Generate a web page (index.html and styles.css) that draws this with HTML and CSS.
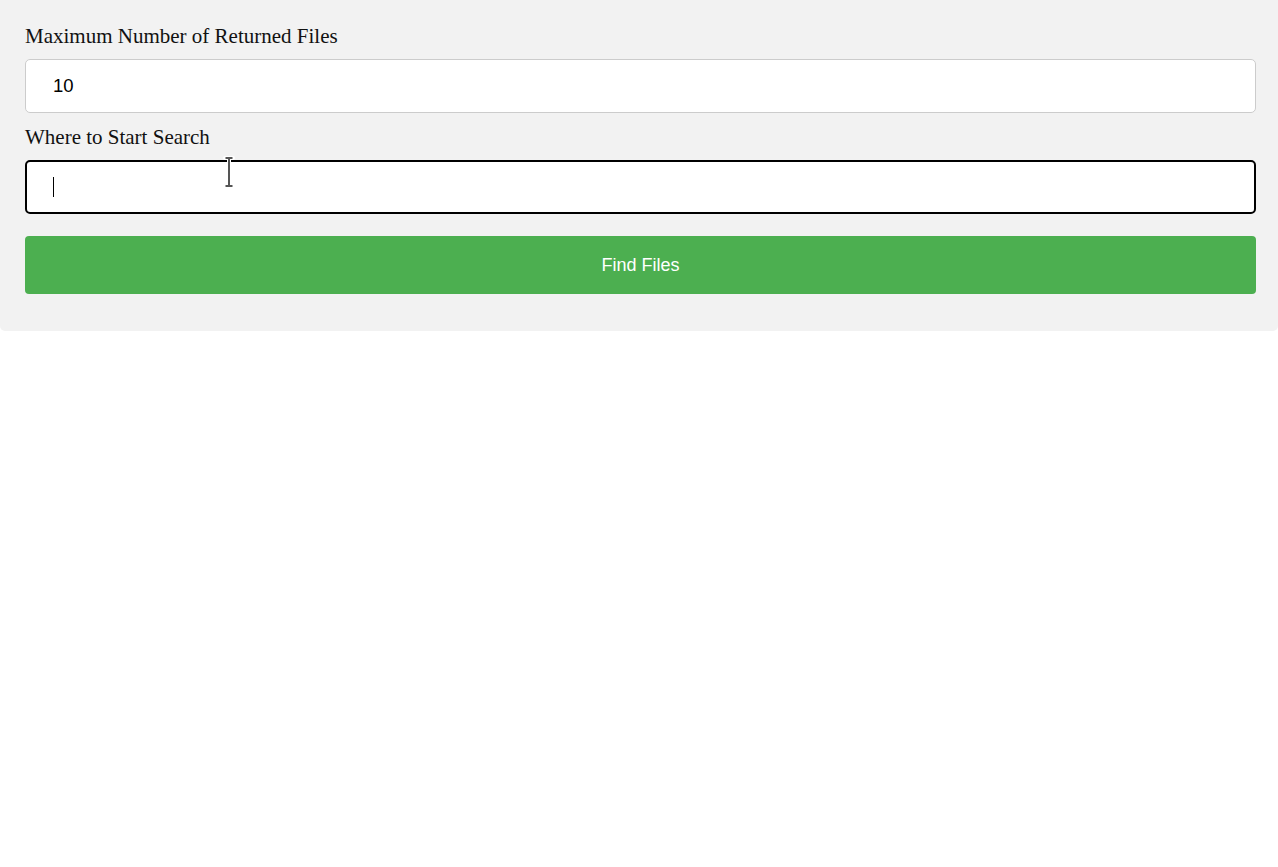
FILE: index.html
```html
<!DOCTYPE html>
<html lang="en">
<head>
  <meta charset="UTF-8">
  <title>File Finder</title>
  <meta name="viewport" content="width=device-width, initial-scale=1.0">
  <link rel="stylesheet" href="styles.css">
</head>
<body>

  <div class="search-box">
    <label for="maxFiles">Maximum Number of Returned Files</label>
    <input type="number" id="maxFiles" value="10">

    <label for="startDir">Where to Start Search</label>
    <div class="field-wrap">
      <input type="text" id="startDir" class="focused" autofocus>
      <span class="caret"></span>
      <!-- mouse pointer sitting over the field -->
      <svg class="ibeam" width="12" height="32" viewBox="0 0 12 32">
        <path d="M2 2h8M6 2v28M2 30h8" stroke="#fff" stroke-width="4" fill="none" stroke-linecap="round"/>
        <path d="M2.5 2h7M6 2v28M2.5 30h7" stroke="#555" stroke-width="2" fill="none"/>
      </svg>
    </div>

    <button onclick="findFiles()">Find Files</button>
  </div>

  <script>
    function findFiles() {
      const max = document.getElementById('maxFiles').value;
      const dir = document.getElementById('startDir').value;
      if (!dir) {
        alert("Please enter a folder to search!");
        return;
      }
      console.log('search', dir, max);
    }
  </script>
</body>
</html>
```

FILE: styles.css
```css
body {
  margin: 0;
  font-family: 'Liberation Serif', 'Times New Roman', serif;
  background: #fff;
}

.search-box {
  background: #f2f2f2;
  padding: 25px 22px 25px 25px;
  border-radius: 0 0 5px 5px;
}

label {
  display: block;
  font-size: 21px;
  line-height: 23px;
  color: #111;
  margin-bottom: 11px;
}

input[type="number"], input[type="text"] {
  display: block;
  box-sizing: border-box;
  width: 100%;
  height: 54px;
  padding: 15px 27px;
  margin: 0 0 13px 0;
  border: 1px solid #ccc;
  border-radius: 5px;
  background: #fff;
  font-family: 'Liberation Sans', Arial, sans-serif;
  font-size: 18.5px;
  color: #000;
  outline: none;
  -moz-appearance: textfield;
}

input::-webkit-outer-spin-button,
input::-webkit-inner-spin-button {
  -webkit-appearance: none;
  margin: 0;
}

input.focused, input:focus {
  border: 2px solid #000;
  padding: 14px 26px;
  caret-color: transparent;
}

.field-wrap {
  position: relative;
}

.caret {
  position: absolute;
  left: 28px;
  top: 17px;
  width: 1px;
  height: 20px;
  background: #000;
}

.ibeam {
  position: absolute;
  left: 198px;
  top: -4px;
  pointer-events: none;
}

button {
  display: block;
  width: 100%;
  height: 58px;
  margin: 22px 0 12px 0;
  background-color: #4caf50;
  color: #fff;
  border: none;
  border-radius: 4px;
  font-family: 'Liberation Sans', Arial, sans-serif;
  font-size: 18px;
  line-height: 58px;
  padding: 0;
  cursor: pointer;
}

button:hover {
  background-color: #45a049;
}
```
